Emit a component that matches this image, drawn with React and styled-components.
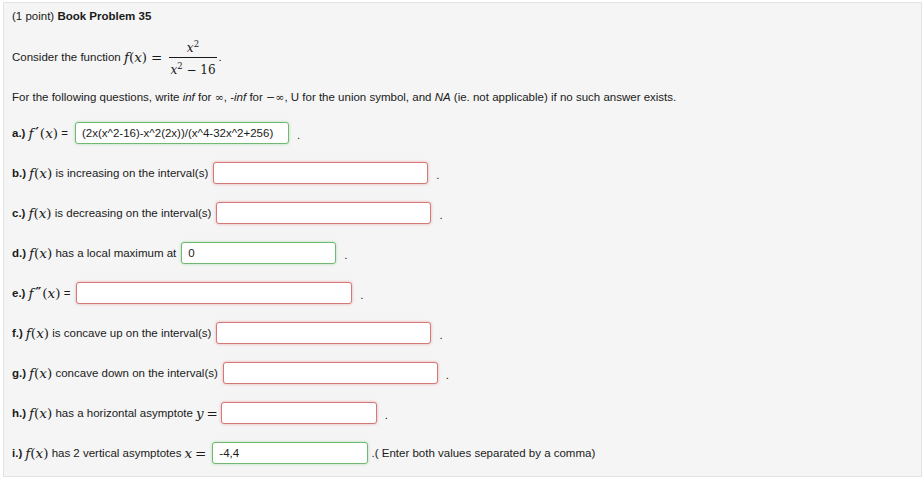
import styled, { createGlobalStyle } from 'styled-components';

const Global = createGlobalStyle`
  body {
    margin: 0;
    background: #fff;
    font-family: "Liberation Sans", Arial, sans-serif;
    font-size: 11.5px;
    color: #1a1a1a;
  }
`;

const Panel = styled.section`
  margin: 2px 2px 0 3px;
  height: 470px;
  border: 1px solid #e3e3e3;
  background: #f5f5f5;
  padding: 3px 9px 0 8px;
`;

const Title = styled.div`
  height: 20px;
  line-height: 20px;

  & b {
    font-weight: bold;
  }
`;

const Line = styled.div`
  display: flex;
  align-items: center;
  height: ${props => props.h || 20}px;
  margin-top: ${props => props.mt || 0}px;
  white-space: nowrap;
`;

const M = styled.span`
  font-family: "DejaVu Serif", "Liberation Serif", serif;
  font-size: ${props => props.size || 13.5}px;
  font-style: ${props => (props.up ? 'normal' : 'italic')};
  margin: 0 ${props => props.gap || 0}px;
`;

const Prime = styled.span`
  font-style: normal;
  font-weight: bold;
  font-size: 13px;
  margin: 0 1px 0 2px;
  position: relative;
  top: -1px;
`;

const Frac = styled.span`
  display: inline-flex;
  flex-direction: column;
  align-items: center;
  margin: 0 2px 0 3px;
  font-family: "DejaVu Serif", "Liberation Serif", serif;
  font-size: 12px;

  & > span {
    padding: 0 1px;
    line-height: 17px;
  }

  & > span:first-child {
    border-bottom: 1px solid #1a1a1a;
    align-self: stretch;
    text-align: center;
  }

  & sup {
    font-size: 8.5px;
    font-style: normal;
  }
`;

const Rows = styled.div`
  margin-top: 6px;
`;

const Row = styled.div`
  display: flex;
  align-items: center;
  height: 40px;
  white-space: nowrap;
`;

const Label = styled.b`
  margin-right: 3px;
`;

const Answer = styled.input`
  box-sizing: border-box;
  height: 22px;
  width: ${props => props.w}px;
  margin-left: ${props => props.ml}px;
  padding: 0 6px;
  font-family: "Liberation Sans", Arial, sans-serif;
  font-size: 11.5px;
  color: #1a1a1a;
  background: #fff;
  border-radius: 3px;
  outline: none;
  border: 1px solid ${props => (props.ok ? '#72b872' : '#d47878')};
  box-shadow: 0 0 3px ${props =>
    props.ok ? 'rgba(92, 184, 92, 0.45)' : 'rgba(217, 83, 79, 0.45)'};
`;

const Dot = styled.span`
  margin-left: 8px;
  position: relative;
  top: 2px;
`;

const Fx = ({ prime }) => (
  <>
    <M>
      f{prime && <Prime>{prime}</Prime>}
    </M>
    <M up>(</M>
    <M>x</M>
    <M up>)</M>
  </>
);

const rows = [
  { l: 'a.)', prime: '′', text: '=', w: 214, ml: 7, val: '(2x(x^2-16)-x^2(2x))/(x^4-32x^2+256)', ok: true },
  { l: 'b.)', text: 'is increasing on the interval(s)', w: 215, ml: 5 },
  { l: 'c.)', text: 'is decreasing on the interval(s)', w: 215, ml: 5 },
  { l: 'd.)', text: 'has a local maximum at', w: 155, ml: 5, val: '0', ok: true },
  { l: 'e.)', prime: '″', text: '=', w: 276, ml: 6 },
  { l: 'f.)', text: 'is concave up on the interval(s)', w: 215, ml: 5 },
  { l: 'g.)', text: 'concave down on the interval(s)', w: 215, ml: 5 },
  { l: 'h.)', text: 'has a horizontal asymptote', math: 'y', w: 156, ml: 3 },
  { l: 'i.)', text: 'has 2 vertical asymptotes', math: 'x', w: 156, ml: 6, val: '-4,4', ok: true, note: '.( Enter both values separated by a comma)' },
];

const App = () => (
  <>
    <Global />
    <Panel>
      <Title>
        (1 point) <b>Book Problem 35</b>
      </Title>
      <Line h={40} mt={11}>
        Consider the function&nbsp;
        <Fx />
        <M up gap={4}>=</M>
        <Frac>
          <span>
            <i>x</i>
            <sup>2</sup>
          </span>
          <span>
            <i>x</i>
            <sup>2</sup> − 16
          </span>
        </Frac>
        .
      </Line>
      <Line mt={10}>
        For the following questions, write&nbsp;<i>inf</i>&nbsp;for&nbsp;<M up size={11}>∞</M>, -<i>inf</i>&nbsp;for&nbsp;
        <M up size={11}>−∞</M>, U for the union symbol, and&nbsp;<i>NA</i>&nbsp;(ie. not applicable) if no such answer
        exists.
      </Line>
      <Rows>
        {rows.map(r => (
          <Row key={r.l}>
            <Label>{r.l}</Label>
            <Fx prime={r.prime} />
            <span>&nbsp;{r.text}</span>
            {r.math && (
              <>
                <M gap={3}>{r.math}</M>
                <M up>=</M>
              </>
            )}
            <Answer w={r.w} ml={r.ml} ok={r.ok} defaultValue={r.val || ''} />
            {r.note ? <span>&nbsp;{r.note}</span> : <Dot>.</Dot>}
          </Row>
        ))}
      </Rows>
    </Panel>
  </>
);

export default App;
